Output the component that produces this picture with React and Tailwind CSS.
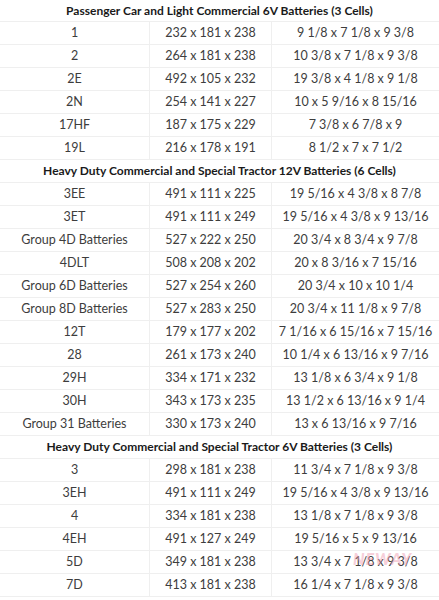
import React from "react";

const sections = [
  {
    title: "Passenger Car and Light Commercial 6V Batteries (3 Cells)",
    rows: [
      ["1", "232 x 181 x 238", "9 1/8 x 7 1/8 x 9 3/8"],
      ["2", "264 x 181 x 238", "10 3/8 x 7 1/8 x 9 3/8"],
      ["2E", "492 x 105 x 232", "19 3/8 x 4 1/8 x 9 1/8"],
      ["2N", "254 x 141 x 227", "10 x 5 9/16 x 8 15/16"],
      ["17HF", "187 x 175 x 229", "7 3/8 x 6 7/8 x 9"],
      ["19L", "216 x 178 x 191", "8 1/2 x 7 x 7 1/2"],
    ],
  },
  {
    title: "Heavy Duty Commercial and Special Tractor 12V Batteries (6 Cells)",
    rows: [
      ["3EE", "491 x 111 x 225", "19 5/16 x 4 3/8 x 8 7/8"],
      ["3ET", "491 x 111 x 249", "19 5/16 x 4 3/8 x 9 13/16"],
      ["Group 4D Batteries", "527 x 222 x 250", "20 3/4 x 8 3/4 x 9 7/8"],
      ["4DLT", "508 x 208 x 202", "20 x 8 3/16 x 7 15/16"],
      ["Group 6D Batteries", "527 x 254 x 260", "20 3/4 x 10 x 10 1/4"],
      ["Group 8D Batteries", "527 x 283 x 250", "20 3/4 x 11 1/8 x 9 7/8"],
      ["12T", "179 x 177 x 202", "7 1/16 x 6 15/16 x 7 15/16"],
      ["28", "261 x 173 x 240", "10 1/4 x 6 13/16 x 9 7/16"],
      ["29H", "334 x 171 x 232", "13 1/8 x 6 3/4 x 9 1/8"],
      ["30H", "343 x 173 x 235", "13 1/2 x 6 13/16 x 9 1/4"],
      ["Group 31 Batteries", "330 x 173 x 240", "13 x 6 13/16 x 9 7/16"],
    ],
  },
  {
    title: "Heavy Duty Commercial and Special Tractor 6V Batteries (3 Cells)",
    rows: [
      ["3", "298 x 181 x 238", "11 3/4 x 7 1/8 x 9 3/8"],
      ["3EH", "491 x 111 x 249", "19 5/16 x 4 3/8 x 9 13/16"],
      ["4", "334 x 181 x 238", "13 1/8 x 7 1/8 x 9 3/8"],
      ["4EH", "491 x 127 x 249", "19 5/16 x 5 x 9 13/16"],
      ["5D", "349 x 181 x 238", "13 3/4 x 7 1/8 x 9 3/8"],
      ["7D", "413 x 181 x 238", "16 1/4 x 7 1/8 x 9 3/8"],
    ],
  },
];

export default function App() {
  return (
    <div
      className="relative w-[439px] h-[600px] overflow-hidden bg-white text-[#3d3d3d] text-[12.5px]"
      style={{ fontFamily: 'Lato, "Open Sans", sans-serif' }}
    >
      {sections.map((s, si) => (
        <div key={si}>
          <div
            className={`flex items-center justify-center font-bold text-[12px] text-[#1a1a1a] border-b border-[#efefef] ${
              si === 0 ? "h-[22px]" : "h-[23px]"
            }`}
          >
            {s.title}
          </div>
          {s.rows.map((r, ri) => (
            <div key={ri} className="grid grid-cols-[150px_122px_167px] h-[23px] border-b border-[#efefef]">
              <div className="flex items-center justify-center border-r border-[#efefef]">{r[0]}</div>
              <div className="flex items-center justify-center border-r border-[#efefef]">{r[1]}</div>
              <div className="flex items-center justify-center">{r[2]}</div>
            </div>
          ))}
        </div>
      ))}
      <div className="pointer-events-none absolute left-[353px] top-[550px] text-[16px] leading-[18px] font-black italic tracking-[1px] text-[#f0a0b4] opacity-50">
        NEWAY
      </div>
    </div>
  );
}
